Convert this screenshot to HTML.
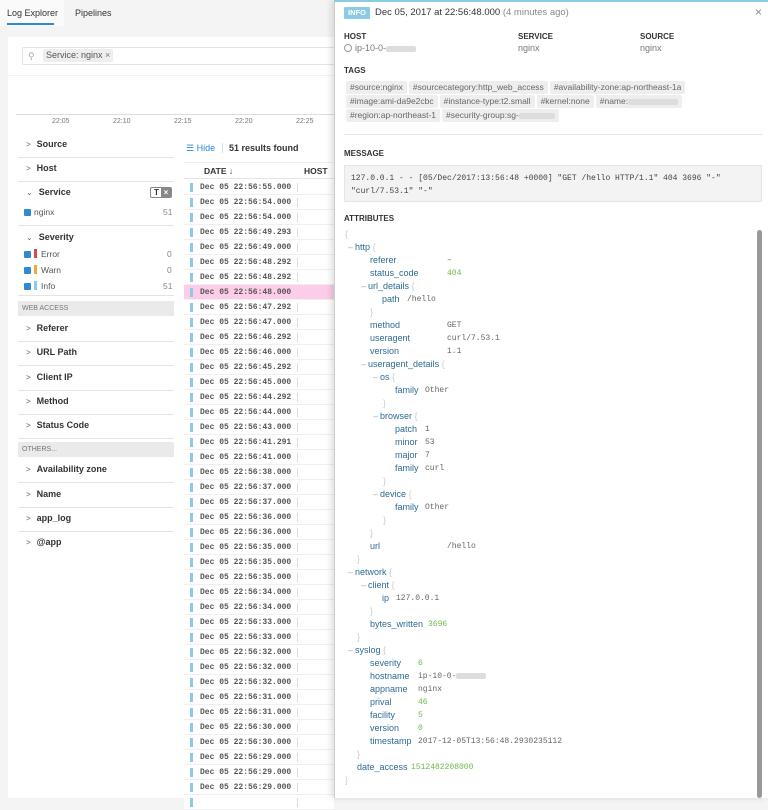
<!DOCTYPE html>
<html><head><meta charset="utf-8"><style>
*{margin:0;padding:0;box-sizing:border-box}
body{width:768px;height:798px;overflow:hidden;background:#f4f4f4;font-family:"Liberation Sans",sans-serif;color:#333;position:relative}
.a{position:absolute;white-space:nowrap}
.mono{font-family:"Liberation Mono",monospace}
.fac{position:absolute;left:18px;width:156px;border-bottom:1px solid #e3e3e3;font-size:9px;font-weight:bold;color:#333}
.chev{display:inline-block;color:#666;font-weight:normal;margin:0 6px 0 8px;font-size:8px}
.sec{position:absolute;left:18px;width:156px;height:15px;background:#eaeaea;font-size:7px;color:#777;padding:4px 0 0 4px}
.row{position:absolute;left:184px;width:150px;height:15px;border-bottom:1px solid #f0f0f0;font-family:"Liberation Mono",monospace;font-size:8px;font-weight:bold;color:#555;padding:3px 0 0 16px;background:#fff}
.row:before{content:"";position:absolute;left:6px;top:3px;width:3px;height:9px;background:#8ccbe4}
.row:after{content:"";position:absolute;left:113px;top:3px;width:1px;height:9px;background:#ddd}
.cb{display:inline-block;width:7px;height:7px;background:#2d8ad3;border-radius:1px;vertical-align:-1px;margin-right:3px}
.k{position:absolute;font-size:9px;color:#2d6b95;white-space:nowrap}
.v{position:absolute;font-family:"Liberation Mono",monospace;font-size:8px;color:#666;white-space:nowrap}
.g{color:#6cba4a}
.br{position:absolute;font-size:9px;color:#ccc}
.d{color:#aaa;margin-right:2px}
.tag{display:inline-block;background:#eee;color:#666;font-size:8.5px;height:13px;line-height:13px;padding:0 4px;margin:0 2px 1px 0;border-radius:2px;vertical-align:top}
.lbl{position:absolute;font-size:8px;font-weight:bold;color:#333}
.blur{display:inline-block;background:#ddd;height:6px;vertical-align:middle;border-radius:2px}
</style></head><body>
<div class="a" style="left:0;top:0;width:64px;height:26px;background:#fafafa"></div>
<div class="a" style="left:7px;top:8px;font-size:9px;color:#333">Log Explorer</div>
<div class="a" style="left:7px;top:23px;width:47px;height:2px;background:#2d8ad3"></div>
<div class="a" style="left:75px;top:8px;font-size:9px;color:#333">Pipelines</div>
<div class="a" style="left:8px;top:37px;width:330px;height:761px;background:#fff"></div>
<div class="a" style="left:8px;top:75px;width:330px;height:1px;background:#f2f2f2"></div>
<div class="a" style="left:22px;top:47px;width:320px;height:18px;border:1px solid #e3e3e3;border-radius:2px;background:#fff"></div>
<div class="a" style="left:28px;top:51px;font-size:9px;color:#aaa">&#9906;</div>
<div class="a" style="left:43px;top:49px;height:13px;background:#eee;border-radius:2px;font-size:9px;color:#555;padding:1px 3px">Service: nginx <span style="color:#777">×</span></div>
<div class="a" style="left:16px;top:114px;width:320px;height:1px;background:#ddd"></div>
<div class="a" style="left:52px;top:118px;font-size:7px;color:#777">22:05</div>
<div class="a" style="left:113px;top:118px;font-size:7px;color:#777">22:10</div>
<div class="a" style="left:174px;top:118px;font-size:7px;color:#777">22:15</div>
<div class="a" style="left:235px;top:118px;font-size:7px;color:#777">22:20</div>
<div class="a" style="left:296px;top:118px;font-size:7px;color:#777">22:25</div>
<div class="fac" style="top:139px;height:19px"><span class="chev">&gt;</span>Source</div>
<div class="fac" style="top:163px;height:19px"><span class="chev">&gt;</span>Host</div>
<div class="fac" style="top:187px;height:39px"><span class="chev">&#8964;</span>Service
 <div class="a" style="left:132px;top:0;width:22px;height:11px;border:1px solid #888;border-radius:2px;font-size:8px;background:#fff"><span style="padding-left:3px">T</span><span style="position:absolute;right:0;top:0;width:10px;height:9px;background:#888;color:#fff;text-align:center;font-size:8px;line-height:9px">×</span></div>
 <div class="a" style="left:6px;top:20px;font-weight:normal;font-size:8.5px;color:#555"><span class="cb"></span>nginx</div>
 <div class="a" style="left:145px;top:20px;font-weight:normal;font-size:8.5px;color:#888">51</div></div>
<div class="fac" style="top:232px;height:64px"><span class="chev">&#8964;</span>Severity
 <div class="a" style="left:6px;top:17px;font-weight:normal;font-size:8.5px;color:#555"><span class="cb"></span><span style="display:inline-block;width:3px;height:9px;background:#e04b3f;vertical-align:-1px;margin-right:4px"></span>Error</div>
 <div class="a" style="left:149px;top:17px;font-weight:normal;font-size:8.5px;color:#888">0</div>
 <div class="a" style="left:6px;top:33px;font-weight:normal;font-size:8.5px;color:#555"><span class="cb"></span><span style="display:inline-block;width:3px;height:9px;background:#f2a93b;vertical-align:-1px;margin-right:4px"></span>Warn</div>
 <div class="a" style="left:149px;top:33px;font-weight:normal;font-size:8.5px;color:#888">0</div>
 <div class="a" style="left:6px;top:49px;font-weight:normal;font-size:8.5px;color:#555"><span class="cb"></span><span style="display:inline-block;width:3px;height:9px;background:#8ccbe4;vertical-align:-1px;margin-right:4px"></span>Info</div>
 <div class="a" style="left:145px;top:49px;font-weight:normal;font-size:8.5px;color:#888">51</div></div>
<div class="sec" style="top:301px">WEB ACCESS</div>
<div class="fac" style="top:323px;height:19px"><span class="chev">&gt;</span>Referer</div>
<div class="fac" style="top:347px;height:19px"><span class="chev">&gt;</span>URL Path</div>
<div class="fac" style="top:372px;height:19px"><span class="chev">&gt;</span>Client IP</div>
<div class="fac" style="top:396px;height:19px"><span class="chev">&gt;</span>Method</div>
<div class="fac" style="top:420px;height:19px"><span class="chev">&gt;</span>Status Code</div>
<div class="sec" style="top:442px">OTHERS...</div>
<div class="fac" style="top:464px;height:19px"><span class="chev">&gt;</span>Availability zone</div>
<div class="fac" style="top:489px;height:19px"><span class="chev">&gt;</span>Name</div>
<div class="fac" style="top:513px;height:19px"><span class="chev">&gt;</span>app_log</div>
<div class="fac" style="top:537px;height:19px;border:none"><span class="chev">&gt;</span>@app</div>
<div class="a" style="left:186px;top:143px;font-size:9px;color:#2d8ad3">&#9776; Hide</div>
<div class="a" style="left:222px;top:143px;width:1px;height:10px;background:#ddd"></div>
<div class="a" style="left:229px;top:143px;font-size:9px;font-weight:bold;color:#333">51 results found</div>
<div class="a" style="left:184px;top:162px;width:150px;height:17px;background:#fff;border-top:1px solid #eee;border-bottom:1px solid #e5e5e5"></div>
<div class="a" style="left:204px;top:166px;font-size:8.5px;font-weight:bold;color:#333">DATE &#8595;</div>
<div class="a" style="left:304px;top:166px;font-size:8.5px;font-weight:bold;color:#333">HOST</div>
<div class="row" style="top:180px">Dec 05 22:56:55.000</div>
<div class="row" style="top:195px">Dec 05 22:56:54.000</div>
<div class="row" style="top:210px">Dec 05 22:56:54.000</div>
<div class="row" style="top:225px">Dec 05 22:56:49.293</div>
<div class="row" style="top:240px">Dec 05 22:56:49.000</div>
<div class="row" style="top:255px">Dec 05 22:56:48.292</div>
<div class="row" style="top:270px">Dec 05 22:56:48.292</div>
<div class="row" style="top:285px;background:#fccce8">Dec 05 22:56:48.000</div>
<div class="row" style="top:300px">Dec 05 22:56:47.292</div>
<div class="row" style="top:315px">Dec 05 22:56:47.000</div>
<div class="row" style="top:330px">Dec 05 22:56:46.292</div>
<div class="row" style="top:345px">Dec 05 22:56:46.000</div>
<div class="row" style="top:360px">Dec 05 22:56:45.292</div>
<div class="row" style="top:375px">Dec 05 22:56:45.000</div>
<div class="row" style="top:390px">Dec 05 22:56:44.292</div>
<div class="row" style="top:405px">Dec 05 22:56:44.000</div>
<div class="row" style="top:420px">Dec 05 22:56:43.000</div>
<div class="row" style="top:435px">Dec 05 22:56:41.291</div>
<div class="row" style="top:450px">Dec 05 22:56:41.000</div>
<div class="row" style="top:465px">Dec 05 22:56:38.000</div>
<div class="row" style="top:480px">Dec 05 22:56:37.000</div>
<div class="row" style="top:495px">Dec 05 22:56:37.000</div>
<div class="row" style="top:510px">Dec 05 22:56:36.000</div>
<div class="row" style="top:525px">Dec 05 22:56:36.000</div>
<div class="row" style="top:540px">Dec 05 22:56:35.000</div>
<div class="row" style="top:555px">Dec 05 22:56:35.000</div>
<div class="row" style="top:570px">Dec 05 22:56:35.000</div>
<div class="row" style="top:585px">Dec 05 22:56:34.000</div>
<div class="row" style="top:600px">Dec 05 22:56:34.000</div>
<div class="row" style="top:615px">Dec 05 22:56:33.000</div>
<div class="row" style="top:630px">Dec 05 22:56:33.000</div>
<div class="row" style="top:645px">Dec 05 22:56:32.000</div>
<div class="row" style="top:660px">Dec 05 22:56:32.000</div>
<div class="row" style="top:675px">Dec 05 22:56:32.000</div>
<div class="row" style="top:690px">Dec 05 22:56:31.000</div>
<div class="row" style="top:705px">Dec 05 22:56:31.000</div>
<div class="row" style="top:720px">Dec 05 22:56:30.000</div>
<div class="row" style="top:735px">Dec 05 22:56:30.000</div>
<div class="row" style="top:750px">Dec 05 22:56:29.000</div>
<div class="row" style="top:765px">Dec 05 22:56:29.000</div>
<div class="row" style="top:780px">Dec 05 22:56:29.000</div>
<div class="row" style="top:795px"></div>

<div class="a" style="left:334px;top:0;width:434px;height:798px;background:#fff;border-left:1px solid #ccc;box-shadow:-3px 0 6px rgba(0,0,0,.12)"></div>
<div class="a" style="left:334px;top:0;width:434px;height:2px;background:#8ccbe4"></div>
<div class="a" style="left:344px;top:7px;width:26px;height:12px;background:#8ccbe4;color:#fff;font-size:7.5px;font-weight:bold;text-align:center;line-height:12px;border-radius:1px">INFO</div>
<div class="a" style="left:375px;top:7px;font-size:9.5px;color:#333">Dec 05, 2017 at 22:56:48.000 <span style="color:#888">(4 minutes ago)</span></div>
<div class="a" style="left:755px;top:5px;font-size:12px;color:#888">×</div>
<div class="lbl" style="left:344px;top:32px">HOST</div>
<div class="lbl" style="left:518px;top:32px">SERVICE</div>
<div class="lbl" style="left:640px;top:32px">SOURCE</div>
<div class="a" style="left:344px;top:43px;font-size:9px;color:#777"><span style="display:inline-block;width:8px;height:8px;border:1.5px solid #999;border-radius:50%;vertical-align:-1px;margin-right:3px"></span>ip-10-0-<span class="blur" style="width:30px"></span></div>
<div class="a" style="left:518px;top:43px;font-size:9px;color:#777">nginx</div>
<div class="a" style="left:640px;top:43px;font-size:9px;color:#777">nginx</div>
<div class="lbl" style="left:344px;top:66px">TAGS</div>
<div class="a" style="left:346px;top:81px;width:412px;white-space:nowrap;line-height:0">
<div style="height:14px"><span class="tag">#source:nginx</span><span class="tag">#sourcecategory:http_web_access</span><span class="tag">#availability-zone:ap-northeast-1a</span></div>
<div style="height:14px"><span class="tag">#image:ami-da9e2cbc</span><span class="tag">#instance-type:t2.small</span><span class="tag">#kernel:none</span><span class="tag">#name:<span class="blur" style="width:50px"></span></span></div>
<div style="height:14px"><span class="tag">#region:ap-northeast-1</span><span class="tag">#security-group:sg-<span class="blur" style="width:36px"></span></span></div>
</div>
<div class="a" style="left:344px;top:134px;width:418px;height:1px;background:#e5e5e5"></div>
<div class="lbl" style="left:344px;top:149px">MESSAGE</div>
<div class="a mono" style="left:344px;top:165px;width:418px;height:37px;background:#f3f3f3;border:1px solid #e5e5e5;font-size:8px;color:#444;padding:6px 6px;line-height:13px;white-space:normal">127.0.0.1 - - [05/Dec/2017:13:56:48 +0000] "GET /hello HTTP/1.1" 404 3696 "-" "curl/7.53.1" "-"</div>
<div class="lbl" style="left:344px;top:214px">ATTRIBUTES</div>
<div class="a" style="left:757px;top:230px;width:5px;height:568px;background:#999;border-radius:3px"></div>

<div class="br" style="left:345px;top:229px">{</div>
<div class="k" style="left:348px;top:242px"><span class="d">–</span>http <span style="color:#ccc">{</span></div>
<div class="k" style="left:370px;top:255px">referer</div><div class="v" style="left:447px;top:256px">–</div>
<div class="k" style="left:370px;top:268px">status_code</div><div class="v g" style="left:447px;top:269px">404</div>
<div class="k" style="left:361px;top:281px"><span class="d">–</span>url_details <span style="color:#ccc">{</span></div>
<div class="k" style="left:382px;top:294px">path</div><div class="v" style="left:407px;top:295px">/hello</div>
<div class="br" style="left:370px;top:307px">}</div>
<div class="k" style="left:370px;top:320px">method</div><div class="v" style="left:447px;top:321px">GET</div>
<div class="k" style="left:370px;top:333px">useragent</div><div class="v" style="left:447px;top:334px">curl/7.53.1</div>
<div class="k" style="left:370px;top:346px">version</div><div class="v" style="left:447px;top:347px">1.1</div>
<div class="k" style="left:361px;top:359px"><span class="d">–</span>useragent_details <span style="color:#ccc">{</span></div>
<div class="k" style="left:373px;top:372px"><span class="d">–</span>os <span style="color:#ccc">{</span></div>
<div class="k" style="left:395px;top:385px">family</div><div class="v" style="left:425px;top:386px">Other</div>
<div class="br" style="left:383px;top:398px">}</div>
<div class="k" style="left:373px;top:411px"><span class="d">–</span>browser <span style="color:#ccc">{</span></div>
<div class="k" style="left:395px;top:424px">patch</div><div class="v" style="left:425px;top:425px">1</div>
<div class="k" style="left:395px;top:437px">minor</div><div class="v" style="left:425px;top:438px">53</div>
<div class="k" style="left:395px;top:450px">major</div><div class="v" style="left:425px;top:451px">7</div>
<div class="k" style="left:395px;top:463px">family</div><div class="v" style="left:425px;top:464px">curl</div>
<div class="br" style="left:383px;top:476px">}</div>
<div class="k" style="left:373px;top:489px"><span class="d">–</span>device <span style="color:#ccc">{</span></div>
<div class="k" style="left:395px;top:502px">family</div><div class="v" style="left:425px;top:503px">Other</div>
<div class="br" style="left:383px;top:515px">}</div>
<div class="br" style="left:370px;top:528px">}</div>
<div class="k" style="left:370px;top:541px">url</div><div class="v" style="left:447px;top:542px">/hello</div>
<div class="br" style="left:357px;top:554px">}</div>
<div class="k" style="left:348px;top:567px"><span class="d">–</span>network <span style="color:#ccc">{</span></div>
<div class="k" style="left:361px;top:580px"><span class="d">–</span>client <span style="color:#ccc">{</span></div>
<div class="k" style="left:382px;top:593px">ip</div><div class="v" style="left:396px;top:594px">127.0.0.1</div>
<div class="br" style="left:370px;top:606px">}</div>
<div class="k" style="left:370px;top:619px">bytes_written</div><div class="v g" style="left:428px;top:620px">3696</div>
<div class="br" style="left:357px;top:632px">}</div>
<div class="k" style="left:348px;top:645px"><span class="d">–</span>syslog <span style="color:#ccc">{</span></div>
<div class="k" style="left:370px;top:658px">severity</div><div class="v g" style="left:418px;top:659px">6</div>
<div class="k" style="left:370px;top:671px">hostname</div><div class="v" style="left:418px;top:672px">ip-10-0-<span class="blur" style="width:30px"></span></div>
<div class="k" style="left:370px;top:684px">appname</div><div class="v" style="left:418px;top:685px">nginx</div>
<div class="k" style="left:370px;top:697px">prival</div><div class="v g" style="left:418px;top:698px">46</div>
<div class="k" style="left:370px;top:710px">facility</div><div class="v g" style="left:418px;top:711px">5</div>
<div class="k" style="left:370px;top:723px">version</div><div class="v g" style="left:418px;top:724px">0</div>
<div class="k" style="left:370px;top:736px">timestamp</div><div class="v" style="left:418px;top:737px">2017-12-05T13:56:48.2930235112</div>
<div class="br" style="left:357px;top:749px">}</div>
<div class="k" style="left:357px;top:762px">date_access</div><div class="v g" style="left:411px;top:763px">1512482208000</div>
<div class="br" style="left:345px;top:775px">}</div>
</body></html>
